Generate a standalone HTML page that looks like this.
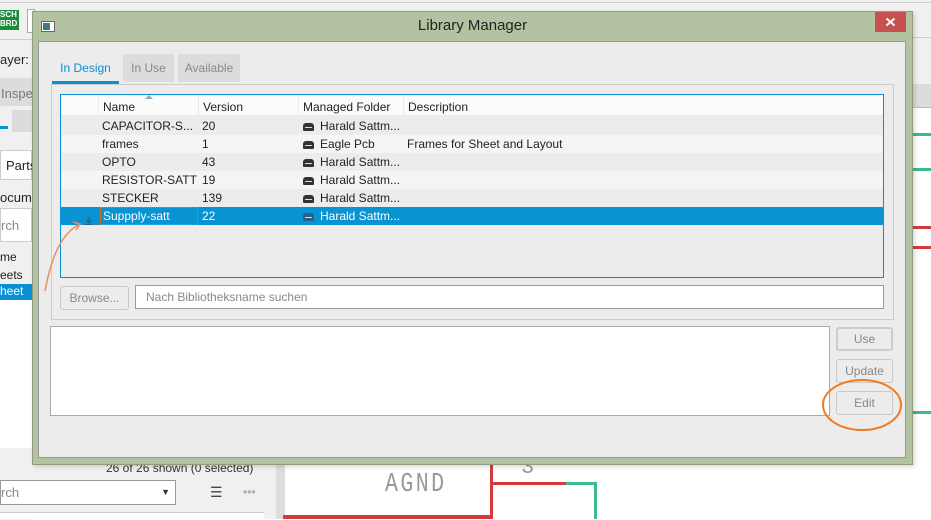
<!DOCTYPE html>
<html><head><meta charset="utf-8"><style>
*{margin:0;padding:0;box-sizing:border-box}
body{width:931px;height:519px;position:relative;overflow:hidden;background:#fff;font-family:"Liberation Sans",sans-serif;font-size:12px;color:#222}
.a{position:absolute}
.row{position:absolute;left:61px;width:822px;height:18px;line-height:19px}
.row span{position:absolute;top:0}
.ic{display:inline-block;width:11px;height:8px;background:#333;border-radius:3px 3px 1px 1px;position:absolute;top:6px}
.ic:after{content:"";position:absolute;left:2px;right:2px;top:4px;height:1px;background:#ddd}
.btn{position:absolute;left:836px;width:57px;height:24px;border:1px solid #c8c8c8;border-radius:3px;background:#ececec;color:#888;text-align:center;line-height:23px}
</style></head><body>
<div class="a" style="left:0;top:0;width:931px;height:40px;background:#f0f0f0;border-bottom:1px solid #ccc"></div>
<div class="a" style="left:0;top:2px;width:931px;height:1px;background:#ccc"></div>
<div class="a" style="left:0;top:10px;width:19px;height:20px;background:#1f8a3c;color:#fff;font-size:8px;font-weight:bold;line-height:9px">SCH<br>BRD</div>
<div class="a" style="left:27px;top:9px;width:8px;height:24px;background:#fff;border:1px solid #aaa"></div>
<div class="a" style="left:0;top:40px;width:32px;height:480px;background:#f0f0f0"></div>
<div class="a" style="left:0;top:52px;font-size:13px">ayer:</div>
<div class="a" style="left:0;top:78px;width:32px;height:28px;background:#dcdcdc;color:#777;padding:8px 0 0 1px;font-size:13px">Inspe</div>
<div class="a" style="left:0;top:126px;width:8px;height:3px;background:#0b8fd4"></div>
<div class="a" style="left:12px;top:110px;width:20px;height:22px;background:#dcdcdc"></div>
<div class="a" style="left:0;top:150px;width:32px;height:30px;background:#fff;border:1px solid #ccc;padding:7px 0 0 5px;font-size:13px">Parts</div>
<div class="a" style="left:0;top:190px;font-size:13px">ocume</div>
<div class="a" style="left:0;top:208px;width:32px;height:34px;background:#fff;border:1px solid #ccc;padding:9px 0 0 0;color:#888;font-size:13px">rch</div>
<div class="a" style="left:0;top:250px;font-size:12px">me</div>
<div class="a" style="left:0;top:268px;font-size:12px">eets</div>
<div class="a" style="left:0;top:284px;width:32px;height:16px;background:#0b8fd4;color:#fff">heet</div>
<div class="a" style="left:0;top:300px;width:32px;height:148px;background:#fff"></div>
<div class="a" style="left:0;top:448px;width:280px;height:71px;background:#f0f0f0"></div>
<div class="a" style="left:106px;top:461px;color:#333;font-size:12px">26 of 26 shown (0 selected)</div>
<div class="a" style="left:0;top:480px;width:176px;height:25px;background:#fff;border:1px solid #999;color:#888;padding:4px 0 0 0;font-size:13px">rch<span style="position:absolute;right:5px;top:6px;font-size:9px;color:#333">▼</span></div>
<div class="a" style="left:210px;top:484px;font-size:14px;color:#444">☰</div>
<div class="a" style="left:243px;top:485px;color:#aaa">•••</div>
<div class="a" style="left:0;top:512px;width:264px;height:7px;background:#fff;border-top:1px solid #ccc"></div>
<div class="a" style="left:276px;top:448px;width:7px;height:71px;background:#ddd"></div>
<div class="a" style="left:912px;top:37px;width:19px;height:50px;background:#f0f0f0;border-top:1px solid #ccc"></div>
<div class="a" style="left:912px;top:84px;width:19px;height:24px;background:#dcdcdc;border-bottom:1px solid #bbb"></div>
<div class="a" style="left:912px;top:133px;width:19px;height:3px;background:#3dbb8f"></div>
<div class="a" style="left:912px;top:168px;width:19px;height:3px;background:#3dbb8f"></div>
<div class="a" style="left:912px;top:226px;width:19px;height:3px;background:#d53b3b"></div>
<div class="a" style="left:912px;top:246px;width:19px;height:3px;background:#d53b3b"></div>
<div class="a" style="left:912px;top:411px;width:19px;height:3px;background:#3dbb8f"></div>
<div class="a" style="left:283px;top:465px;width:2px;height:54px;background:#ddd"></div>
<div class="a" style="left:385px;top:470px;font-family:'Liberation Mono',monospace;font-size:27px;color:#999;letter-spacing:3px;transform:scaleX(0.8);transform-origin:left">AGND</div>
<div class="a" style="left:521px;top:455px;font-family:'Liberation Mono',monospace;font-size:22px;color:#999">3</div>
<div class="a" style="left:490px;top:465px;width:3px;height:54px;background:#d53b3b"></div>
<div class="a" style="left:490px;top:482px;width:76px;height:3px;background:#d53b3b"></div>
<div class="a" style="left:566px;top:482px;width:30px;height:3px;background:#3dbb8f"></div>
<div class="a" style="left:594px;top:482px;width:3px;height:37px;background:#3dbb8f"></div>
<div class="a" style="left:283px;top:515px;width:210px;height:4px;background:#d53b3b"></div>

<div class="a" style="left:32px;top:11px;width:881px;height:454px;background:#b3c3a1;border:1px solid #8f9c80;box-shadow:2px 2px 4px rgba(0,0,0,.15)"></div>
<div class="a" style="left:41px;top:21px;width:14px;height:11px;border:1px solid #666;background:#fff"><div style="position:absolute;left:1px;top:1px;width:7px;height:7px;background:#3a7a8a"></div></div>
<div class="a" style="left:32px;top:17px;width:881px;text-align:center;font-size:15px;color:#222">Library Manager</div>
<div class="a" style="left:875px;top:12px;width:31px;height:20px;background:#c75050"><svg width="31" height="20"><path d="M11.5 6.5 L19.5 13.5 M19.5 6.5 L11.5 13.5" stroke="#fff" stroke-width="2"/></svg></div>
<div class="a" style="left:38px;top:41px;width:868px;height:417px;background:#ececec;border:1px solid #999"></div>
<div class="a" style="left:52px;top:54px;width:67px;height:30px;color:#0b8fd4;text-align:center;line-height:28px">In Design</div>
<div class="a" style="left:52px;top:81px;width:67px;height:3px;background:#0b8fd4"></div>
<div class="a" style="left:123px;top:54px;width:51px;height:28px;background:#dcdcdc;color:#888;text-align:center;line-height:28px">In Use</div>
<div class="a" style="left:178px;top:54px;width:62px;height:28px;background:#dcdcdc;color:#888;text-align:center;line-height:28px">Available</div>
<div class="a" style="left:51px;top:84px;width:843px;height:236px;border:1px solid #ccc"></div>
<div class="a" style="left:60px;top:94px;width:824px;height:184px;border:1px solid #0b8fd4;background:#ececec"></div>
<div class="a" style="left:61px;top:95px;width:822px;height:21px;background:#fbfbfb;border-bottom:1px solid #e4ecf7"></div>
<div class="a" style="left:98px;top:95px;width:1px;height:21px;background:#e4ecf7"></div>
<div class="a" style="left:198px;top:95px;width:1px;height:21px;background:#e4ecf7"></div>
<div class="a" style="left:298px;top:95px;width:1px;height:21px;background:#e4ecf7"></div>
<div class="a" style="left:403px;top:95px;width:1px;height:21px;background:#e4ecf7"></div>
<svg class="a" style="left:145px;top:95px" width="8" height="4"><path d="M0 4 L4 0 L8 4Z" fill="#8ab"/></svg>
<div class="a" style="left:103px;top:100px">Name</div>
<div class="a" style="left:203px;top:100px">Version</div>
<div class="a" style="left:303px;top:100px">Managed Folder</div>
<div class="a" style="left:408px;top:100px">Description</div>
<div class="row" style="top:117px;background:#ececec"><span style="left:41px">CAPACITOR-S...</span><span style="left:141px">20</span><i class="ic" style="left:242px"></i><span style="left:259px">Harald Sattm...</span></div>
<div class="row" style="top:135px;background:#f5f5f5"><span style="left:41px">frames</span><span style="left:141px">1</span><i class="ic" style="left:242px"></i><span style="left:259px">Eagle Pcb</span><span style="left:346px">Frames for Sheet and Layout</span></div>
<div class="row" style="top:153px;background:#ececec"><span style="left:41px">OPTO</span><span style="left:141px">43</span><i class="ic" style="left:242px"></i><span style="left:259px">Harald Sattm...</span></div>
<div class="row" style="top:171px;background:#f5f5f5"><span style="left:41px">RESISTOR-SATT</span><span style="left:141px">19</span><i class="ic" style="left:242px"></i><span style="left:259px">Harald Sattm...</span></div>
<div class="row" style="top:189px;background:#ececec"><span style="left:41px">STECKER</span><span style="left:141px">139</span><i class="ic" style="left:242px"></i><span style="left:259px">Harald Sattm...</span></div>
<div class="row" style="top:207px;background:#0893d3;color:#fff"><span style="left:24px;top:5px;width:8px;height:8px"><svg width="8" height="8"><path d="M4 0 V5 M1.5 3 L4 5.5 L6.5 3 M0 7.5 H8" stroke="#2a5f86" stroke-width="1.3" fill="none"/></svg></span><span style="left:39px;top:0;width:98px;height:18px;border:1px dotted #e87a2a;padding-left:2px;line-height:17px">Suppply-satt</span><span style="left:141px">22</span><i class="ic" style="left:242px;background:#2a5f86"></i><span style="left:259px">Harald Sattm...</span></div>
<div class="a" style="left:60px;top:286px;width:69px;height:24px;border:1px solid #c8c8c8;border-radius:3px;color:#888;text-align:center;line-height:23px">Browse...</div>
<div class="a" style="left:135px;top:285px;width:749px;height:24px;border:1px solid #999;background:#fff;color:#888;padding-left:10px;line-height:23px">Nach Bibliotheksname suchen</div>
<div class="a" style="left:50px;top:326px;width:780px;height:90px;border:1px solid #aaa;background:#fff"></div>
<div class="btn" style="top:327px;border:2px solid #ccc;line-height:21px">Use</div>
<div class="btn" style="top:359px">Update</div>
<div class="btn" style="top:391px">Edit</div>
<svg class="a" style="left:0;top:0" width="931" height="519">
<ellipse cx="862" cy="405" rx="39" ry="25" fill="none" stroke="#f07a1e" stroke-width="2"/>
<path d="M45 291 C50 265 58 235 80 224" fill="none" stroke="#f08a5a" stroke-width="1.5"/>
<path d="M73 222 L80 224 L76 230" fill="none" stroke="#f08a5a" stroke-width="1.5"/>
</svg>
</body></html>
